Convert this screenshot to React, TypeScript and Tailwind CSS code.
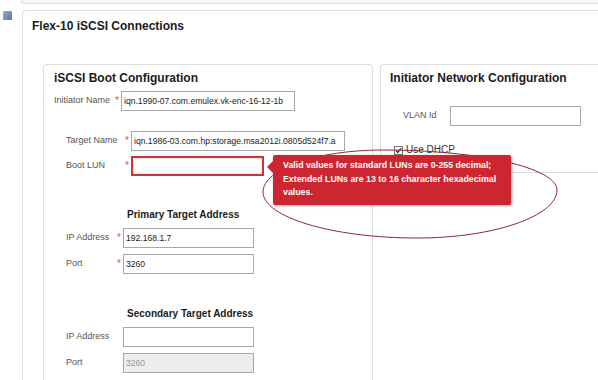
const sans = "font-['Liberation_Sans',Arial,sans-serif]";

function Req() {
  return <span className="w-[6px] text-[10px] leading-none text-[#d4556a]">*</span>;
}

function Field({
  label,
  labelW,
  required,
  value,
  inputW,
  disabled,
  error,
  className,
}: {
  label: string;
  labelW: string;
  required?: boolean;
  value?: string;
  inputW: string;
  disabled?: boolean;
  error?: boolean;
  className?: string;
}) {
  return (
    <div className={`flex items-center ${className ?? ""}`}>
      <span className={`${labelW} text-[9px] text-[#555]`}>{label}</span>
      {required ? <Req /> : <span className="w-[6px]" />}
      <div
        className={`${inputW} flex h-[20px] items-center overflow-hidden whitespace-nowrap px-[2px] text-[8.6px] ${
          error
            ? "border-2 border-[#c9343f] shadow-[inset_0_0_2px_#f3a5ad]"
            : "border border-[#a8a8a8]"
        } ${disabled ? "bg-[#ededed] text-[#9a9a9a]" : "bg-white text-[#222]"}`}
      >
        {value}
      </div>
    </div>
  );
}

export default function App() {
  return (
    <div className={`relative h-[380px] w-[598px] overflow-hidden bg-white ${sans}`}>
      {/* bottom of the previous panel */}
      <div className="ml-[21px] h-[4px] rounded-bl-[3px] border-b border-l border-[#e1e1e1] bg-[#f7f7f7]" />

      <div className="mt-[6px] flex">
        <div className="ml-[3px] mt-[1px] h-[9px] w-[9px] rounded-[1px] bg-gradient-to-br from-[#9aaecb] to-[#5d7698]" />
        <div className="-mr-[10px] ml-[10px] flex-1 rounded-tl-[4px] border-l border-t border-[#dedede] pb-[40px]">
          <h1 className="pl-[9px] pt-[8px] text-[12px] font-bold leading-[15px] text-[#1b1b1b]">
            Flex-10 iSCSI Connections
          </h1>

          <div className="mt-[30px] flex items-start gap-[7px] pl-[20px]">
            {/* iSCSI Boot Configuration */}
            <div className="h-[340px] w-[330px] shrink-0 rounded-t-[4px] border-l border-r border-t border-[#dcdcdc]">
              <h2 className="pl-[10px] pt-[6px] text-[12px] font-bold leading-[15px] text-[#1b1b1b]">
                iSCSI Boot Configuration
              </h2>
              <Field
                className="mt-[5px] pl-[10px]"
                label="Initiator Name"
                labelW="w-[61px]"
                required
                value="iqn.1990-07.com.emulex.vk-enc-16-12-1b"
                inputW="w-[174px]"
              />
              <Field
                className="mt-[20px] pl-[22px]"
                label="Target Name"
                labelW="w-[59px]"
                required
                value="iqn.1986-03.com.hp:storage.msa2012i.0805d524f7.a"
                inputW="w-[214px]"
              />
              <Field
                className="mt-[5px] pl-[22px]"
                label="Boot LUN"
                labelW="w-[59px]"
                required
                inputW="w-[133px]"
                error
              />

              <h3 className="ml-[83px] mt-[32px] text-[10px] font-bold leading-[13px] text-[#1b1b1b]">
                Primary Target Address
              </h3>
              <Field
                className="mt-[7px] pl-[22px]"
                label="IP Address"
                labelW="w-[51px]"
                required
                value="192.168.1.7"
                inputW="w-[131px]"
              />
              <Field
                className="mt-[6px] pl-[22px]"
                label="Port"
                labelW="w-[51px]"
                required
                value="3260"
                inputW="w-[131px]"
              />

              <h3 className="ml-[83px] mt-[33px] text-[10px] font-bold leading-[13px] text-[#1b1b1b]">
                Secondary Target Address
              </h3>
              <Field
                className="mt-[7px] pl-[22px]"
                label="IP Address"
                labelW="w-[51px]"
                value=""
                inputW="w-[131px]"
              />
              <Field
                className="mt-[6px] pl-[22px]"
                label="Port"
                labelW="w-[51px]"
                value="3260"
                inputW="w-[131px]"
                disabled
              />
            </div>

            {/* Initiator Network Configuration */}
            <div className="h-[109px] flex-1 rounded-tl-[4px] border-b border-l border-t border-[#dcdcdc]">
              <h2 className="pl-[9px] pt-[6px] text-[12px] font-bold leading-[15px] text-[#1b1b1b]">
                Initiator Network Configuration
              </h2>
              <div className="mt-[20px] flex items-center pl-[22px]">
                <span className="w-[47px] text-[9px] text-[#555]">VLAN Id</span>
                <div className="h-[20px] w-[131px] border border-[#a8a8a8] bg-white" />
              </div>
              <div className="mt-[19px] flex items-center gap-[3px] pl-[13px]">
                <svg width="9" height="9" viewBox="0 0 9 9" className="shrink-0">
                  <rect x="0.5" y="0.5" width="8" height="8" fill="#fff" stroke="#777" />
                  <path d="M2 4.5 L3.8 6.5 L7.2 2.2" fill="none" stroke="#333" strokeWidth="1.3" />
                </svg>
                <span className="text-[10px] leading-none text-[#333]">Use DHCP</span>
              </div>
            </div>
          </div>
        </div>
      </div>

      {/* hand drawn highlight */}
      <svg className="pointer-events-none absolute left-0 top-0" width="598" height="380">
        <path
          d="M263 192 C263 169 317 150 383 150 C479 150 557 168 557 190 C557 216 494 238 417 238 C332 238 263 217 263 192 Z"
          fill="none"
          stroke="#8a2b2e"
          strokeWidth="1"
        />
      </svg>

      {/* validation tooltip */}
      <div className="absolute left-[273px] top-[155px] w-[238px] whitespace-nowrap rounded-[2px] bg-[#cc2630] pb-[5px] pl-[10px] pt-[4px] text-[8.8px] font-bold leading-[13.5px] text-white shadow-[1px_1px_3px_rgba(0,0,0,0.35)]">
        <span className="absolute -left-[6px] top-[6px] h-0 w-0 border-b-[6px] border-r-[6px] border-t-[6px] border-b-transparent border-r-[#cc2630] border-t-transparent" />
        Valid values for standard LUNs are 0-255 decimal;
        <br />
        Extended LUNs are 13 to 16 character hexadecimal
        <br />
        values.
      </div>
    </div>
  );
}
